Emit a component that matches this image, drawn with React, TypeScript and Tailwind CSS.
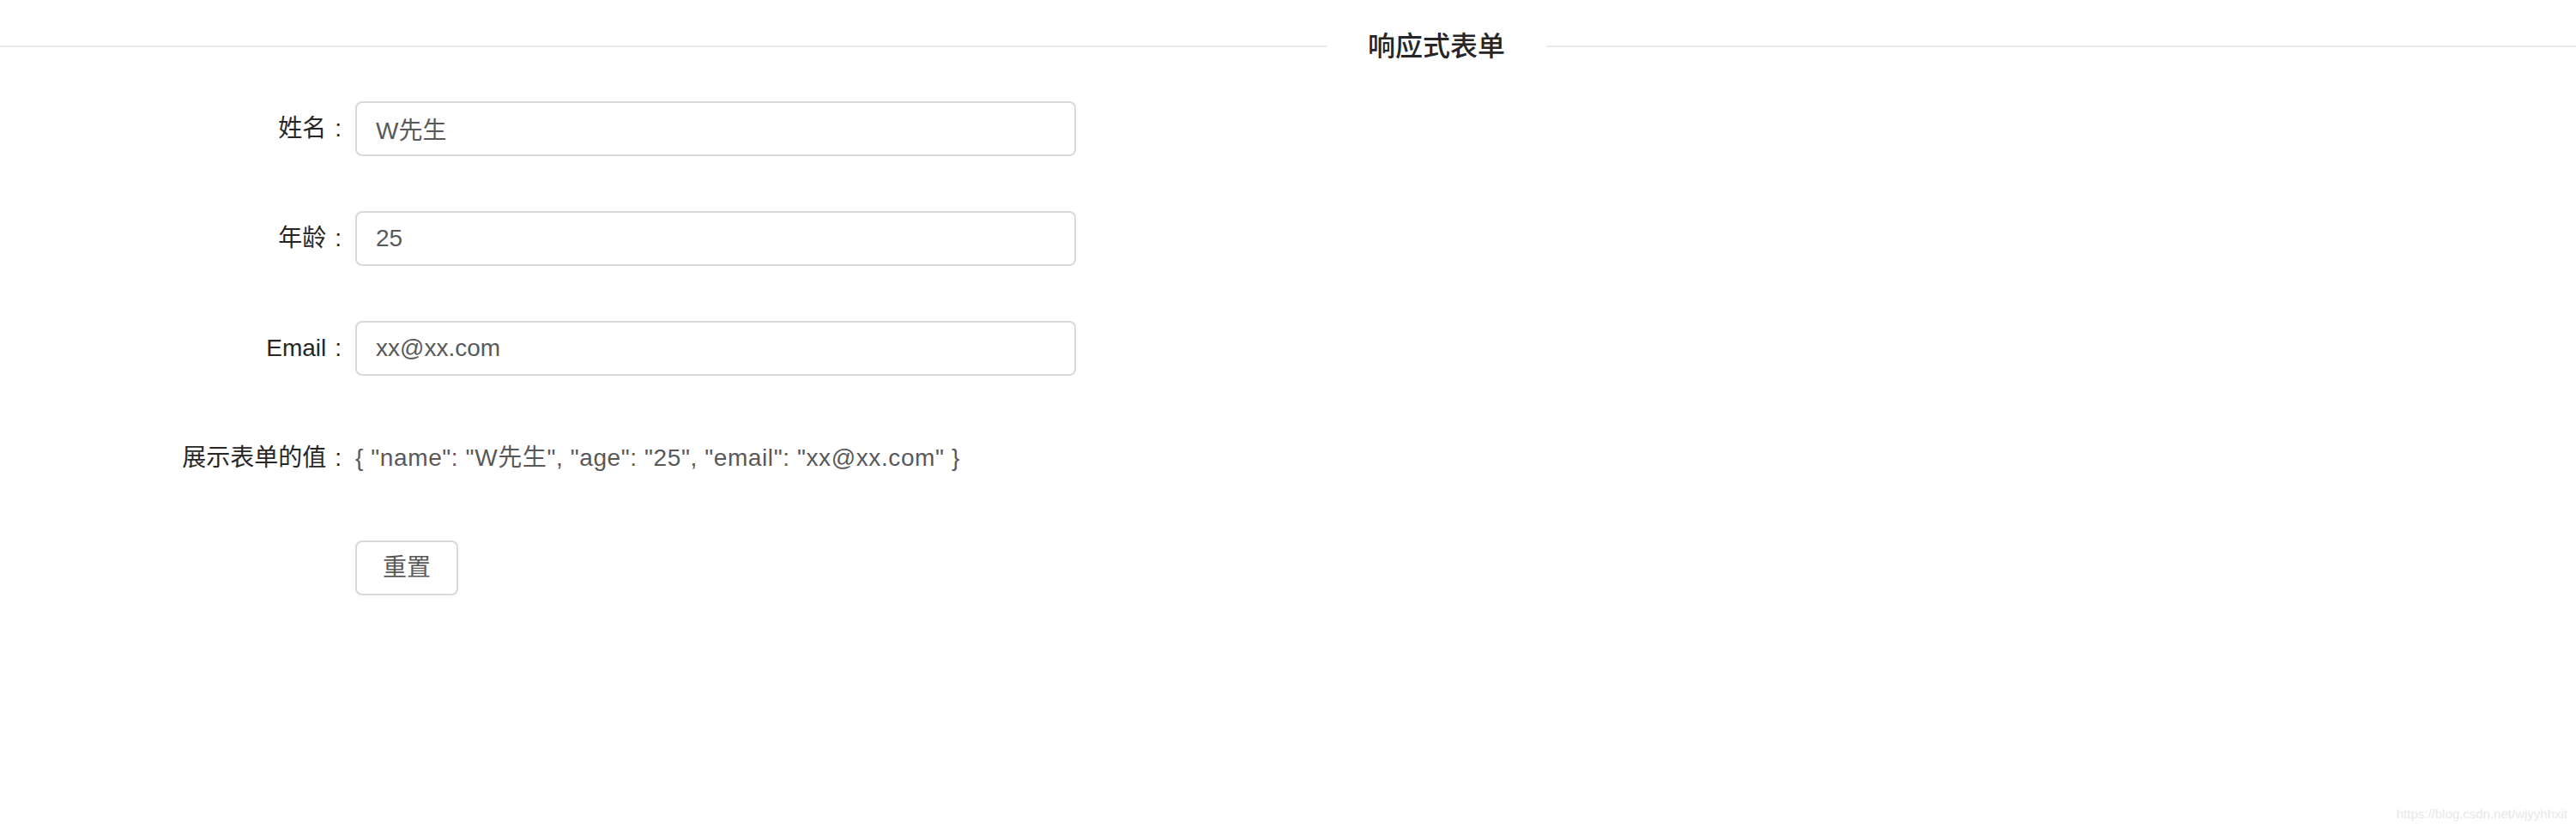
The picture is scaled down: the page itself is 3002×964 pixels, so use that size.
import React from 'react';

const FONT = '"Liberation Sans", "Noto Sans CJK SC", sans-serif';

const FIELDS = [
  { label: '姓名', value: 'W先生' },
  { label: '年龄', value: '25' },
  { label: 'Email', value: 'xx@xx.com' },
];

function FormRow({ label, children }: { label?: string; children: React.ReactNode }) {
  return (
    <div className="mb-[48px] flex h-[80px] items-center">
      <div className="w-[414px] shrink-0 text-right text-[28px] leading-[80px] text-[#262626]">
        {label && (
          <>
            {label}
            <span className="ml-[10px] mr-[16px]">:</span>
          </>
        )}
      </div>
      <div className="flex items-center">{children}</div>
    </div>
  );
}

export default function App() {
  const values = { name: 'W先生', age: '25', email: 'xx@xx.com' };
  const display = `{ "name": "${values.name}", "age": "${values.age}", "email": "${values.email}" }`;

  return (
    <div className="relative h-[964px] w-full overflow-hidden bg-white" style={{ fontFamily: FONT }}>
      <div className="mt-[30px] flex h-[48px] items-center">
        <div className="h-[2px] w-[1546px] shrink-0 bg-[#e8e8e8]" />
        <span className="shrink-0 px-[48px] text-[32px] font-medium leading-[48px] text-[#262626]">
          响应式表单
        </span>
        <div className="h-[2px] flex-1 bg-[#e8e8e8]" />
      </div>

      <form className="mt-[32px]" onSubmit={(e) => e.preventDefault()}>
        {FIELDS.map((f) => (
          <FormRow key={f.label} label={f.label}>
            <input
              readOnly
              value={f.value}
              className="h-[64px] w-[840px] rounded-[8px] border-2 border-[#d9d9d9] bg-white px-[22px] text-[28px] text-[#595959] outline-none"
            />
          </FormRow>
        ))}

        <FormRow label="展示表单的值">
          <span className="text-[28px] leading-[80px] tracking-[0.6px] text-[#595959]">{display}</span>
        </FormRow>

        <FormRow>
          <button
            type="button"
            className="h-[64px] w-[120px] rounded-[8px] border-2 border-[#d9d9d9] bg-white text-[28px] text-[#595959] shadow-[0_4px_0_rgba(0,0,0,0.015)]"
          >
            重置
          </button>
        </FormRow>
      </form>

      <div className="absolute bottom-[4px] right-[10px] text-[15px] text-[#e8e8e8]">
        https://blog.csdn.net/wjyyhhxit
      </div>
    </div>
  );
}
